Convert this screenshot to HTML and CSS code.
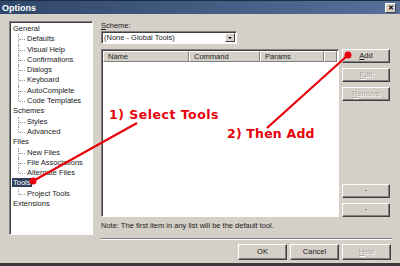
FILE: index.html
```html
<!DOCTYPE html>
<html>
<head lang="en">
    <meta charset="UTF-8">
    <title>Options</title>
    <link rel="stylesheet" href="styles.css">
</head>
<body>

<div class="window">
    <div class="titlebar">
        <span class="title">Options</span>
        <span class="close">&#x2715;</span>
    </div>

    <div class="main">
        <div class="tree">
            <div class="node">General</div>
            <div class="group">
                <div class="leaf">Defaults</div>
                <div class="leaf">Visual Help</div>
                <div class="leaf">Confirmations</div>
                <div class="leaf">Dialogs</div>
                <div class="leaf">Keyboard</div>
                <div class="leaf">AutoComplete</div>
                <div class="leaf last">Code Templates</div>
            </div>
            <div class="node">Schemes</div>
            <div class="group">
                <div class="leaf">Styles</div>
                <div class="leaf last">Advanced</div>
            </div>
            <div class="node">Files</div>
            <div class="group">
                <div class="leaf">New Files</div>
                <div class="leaf">File Associations</div>
                <div class="leaf last">Alternate Files</div>
            </div>
            <div class="node"><span class="selected">Tools</span></div>
            <div class="group">
                <div class="leaf last">Project Tools</div>
            </div>
            <div class="node">Extensions</div>
        </div>

        <div class="right">
            <div class="label"><u>S</u>cheme:</div>
            <div class="combo">
                <span class="combo-text">(None - Global Tools)</span>
                <span class="combo-btn"><span class="arrow"></span></span>
            </div>

            <div class="listrow">
                <div class="list">
                    <div class="header">
                        <div class="col col-name">Name</div>
                        <div class="col col-cmd">Command</div>
                        <div class="col col-params">Params</div>
                        <div class="col col-rest"></div>
                    </div>
                </div>
                <div class="btncol">
                    <div class="btn"><u>A</u>dd</div>
                    <div class="btn disabled"><u>E</u>dit</div>
                    <div class="btn disabled"><u>R</u>emove</div>
                    <div class="spacer"></div>
                    <div class="btn small">&#x2022;</div>
                    <div class="btn small">&#x2022;</div>
                </div>
            </div>

            <div class="note">Note: The first item in any list will be the default tool.</div>
            <div class="sep"></div>

            <div class="footer">
                <div class="btn wide">OK</div>
                <div class="btn wide">Cancel</div>
                <div class="btn wide disabled"><u>H</u>elp</div>
            </div>
        </div>
    </div>

    <svg class="marks" width="400" height="266">
        <line x1="137" y1="123" x2="33" y2="181" stroke="#e8000a" stroke-width="2.2"/>
        <circle cx="33" cy="181" r="3.5" fill="#e8000a"/>
        <line x1="267" y1="128" x2="348" y2="55" stroke="#e8000a" stroke-width="2.2"/>
        <circle cx="348" cy="55" r="3.5" fill="#e8000a"/>
    </svg>
    <div class="callout one">1) Select Tools</div>
    <div class="callout two">2) Then Add</div>
</div>

</body>
</html>
```

FILE: styles.css
```css
body, html {
    padding: 0;
    margin: 0;
}

body {
    width: 400px;
    height: 266px;
    overflow: hidden;
    font-family: "Liberation Sans", Arial, sans-serif;
    font-size: 7.5px;
    color: #222;
}

.window {
    position: relative;
    width: 400px;
    height: 266px;
    box-sizing: border-box;
    background-color: #d4d0c8;
    border-bottom: 3px solid #3a3a3a;
}

.titlebar {
    height: 14px;
    display: flex;
    align-items: center;
    justify-content: space-between;
    padding: 0 4px 0 2px;
    background: linear-gradient(to right, #2f4769, #56709a);
    border-top: 1px solid #1c2c44;
    box-sizing: border-box;
}

.title {
    color: #fff;
    font-weight: bold;
    font-size: 9px;
}

.close {
    width: 9px;
    height: 8px;
    line-height: 8px;
    text-align: center;
    font-size: 7px;
    font-weight: bold;
    color: #000;
    background-color: #d4d0c8;
    border: 1px solid;
    border-color: #fff #404040 #404040 #fff;
}

.main {
    display: flex;
    padding: 7px 8px 0 9px;
}

/* tree */

.tree {
    width: 84px;
    height: 214px;
    box-sizing: border-box;
    background-color: #fff;
    border: 1px solid;
    border-color: #808080 #fff #fff #808080;
    box-shadow: inset 1px 1px 0 #404040;
    padding: 2px 0 0 3px;
    line-height: 10.3px;
}

.group {
    margin-left: 5px;
}

.leaf {
    position: relative;
    padding-left: 8px;
    border-left: 1px dotted #999;
}

.leaf.last {
    border-left-color: transparent;
}

.leaf.last:after {
    content: "";
    position: absolute;
    left: -1px;
    top: 0;
    height: 5px;
    border-left: 1px dotted #999;
}

.leaf:before {
    content: "";
    position: absolute;
    left: 0;
    top: 5px;
    width: 6px;
    border-top: 1px dotted #999;
}

.selected {
    background-color: #2f3f5f;
    color: #fff;
    padding: 0 1px;
    margin-left: -1px;
}

/* right side */

.right {
    display: flex;
    flex-direction: column;
    margin-left: 8px;
    flex: 1;
}

.label {
    height: 10px;
    line-height: 10px;
}

.combo {
    display: flex;
    width: 136px;
    height: 13px;
    box-sizing: border-box;
    background-color: #fff;
    border: 1px solid;
    border-color: #808080 #fff #fff #808080;
    box-shadow: inset 1px 1px 0 #404040;
}

.combo-text {
    flex: 1;
    padding-left: 2px;
    line-height: 11px;
}

.combo-btn {
    width: 10px;
    height: 9px;
    margin: 1px 1px 0 0;
    background-color: #d4d0c8;
    border: 1px solid;
    border-color: #fff #404040 #404040 #fff;
    box-sizing: border-box;
    display: flex;
    align-items: center;
    justify-content: center;
}

.arrow {
    border-left: 2px solid transparent;
    border-right: 2px solid transparent;
    border-top: 2px solid #000;
}

.listrow {
    display: flex;
    margin-top: 5px;
}

.list {
    width: 238px;
    height: 168px;
    box-sizing: border-box;
    background-color: #fff;
    border: 1px solid;
    border-color: #808080 #fff #fff #808080;
    box-shadow: inset 1px 1px 0 #404040;
    padding: 1px 1px 0 1px;
}

.header {
    display: flex;
    height: 11px;
}

.col {
    box-sizing: border-box;
    background-color: #d4d0c8;
    border: 1px solid;
    border-color: #fff #808080 #808080 #fff;
    padding-left: 4px;
    line-height: 9px;
}

.col-name {
    width: 86px;
}

.col-cmd {
    width: 71px;
}

.col-params {
    width: 64px;
}

.col-rest {
    flex: 1;
}

.btncol {
    display: flex;
    flex-direction: column;
    margin-left: 3px;
    gap: 5px;
}

.spacer {
    flex: 1;
}

.btn {
    width: 48px;
    height: 14px;
    box-sizing: border-box;
    background-color: #d4d0c8;
    border: 1px solid;
    border-color: #fff #404040 #404040 #fff;
    box-shadow: inset -1px -1px 0 #808080;
    text-align: center;
    line-height: 12px;
}

.btn.small {
    font-size: 4px;
}

.btn.disabled {
    color: #a8a6a0;
    text-shadow: 1px 1px 0 #fff;
}

.note {
    margin-top: 3px;
    height: 12px;
    line-height: 12px;
}

.sep {
    margin-top: 6px;
    width: 291px;
    border-top: 1px solid #808080;
    border-bottom: 1px solid #fff;
}

.footer {
    display: flex;
    margin-top: 4px;
    margin-left: 137px;
    gap: 3px;
}

.btn.wide {
    width: 49px;
    height: 16px;
    line-height: 14px;
}

/* annotations drawn on top of the dialog */

.marks {
    position: absolute;
    left: 0;
    top: 0;
}

.callout {
    position: absolute;
    color: #e8000a;
    font-weight: bold;
    font-size: 12.5px;
    font-family: "DejaVu Sans", sans-serif;
    letter-spacing: 0.2px;
}

.callout.one {
    left: 109px;
    top: 107px;
    letter-spacing: 0.5px;
}

.callout.two {
    left: 227px;
    top: 126px;
}
```
